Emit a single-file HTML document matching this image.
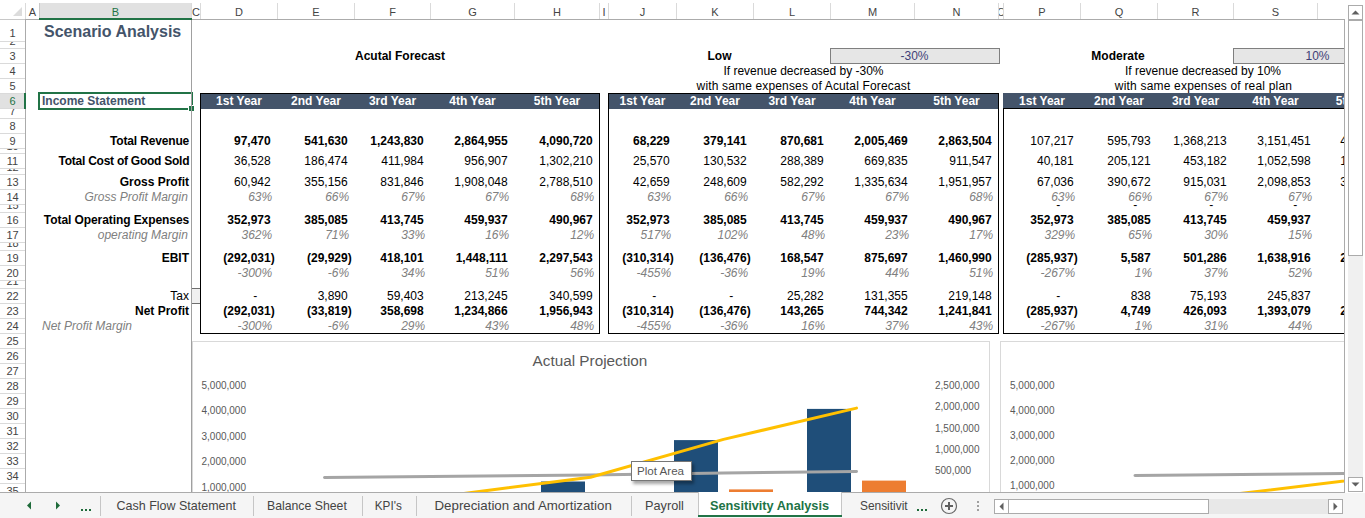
<!DOCTYPE html>
<html><head><meta charset="utf-8"><style>
html,body{margin:0;padding:0;background:#fff;}
body{width:1365px;height:518px;overflow:hidden;position:relative;font-family:"Liberation Sans", sans-serif;}
#root div,#root svg{position:absolute;white-space:pre;}
#root svg text{font-family:"Liberation Sans", sans-serif;}
</style></head><body><div id="root">
<div style="left:26px;top:20px;width:1318px;height:472px;overflow:hidden">
<div style="left:-26px;top:-20px;width:1365px;height:518px">
<div style="top:24.26px;font-size:16px;line-height:16px;color:#44546A;font-weight:bold;left:44px;">Scenario Analysis</div>
<div style="top:95.44px;font-size:12px;line-height:12px;color:#44546A;font-weight:bold;left:42px;">Income Statement</div>
<div style="top:135.44px;font-size:12px;line-height:12px;color:#000;font-weight:bold;right:1175.85px;letter-spacing:-0.15px">Total Revenue</div>
<div style="top:155.44px;font-size:12px;line-height:12px;color:#000;font-weight:bold;right:1175.75px;letter-spacing:-0.25px">Total Cost of Good Sold</div>
<div style="top:176.44px;font-size:12px;line-height:12px;color:#000;font-weight:bold;right:1176px;">Gross Profit</div>
<div style="top:191.44px;font-size:12px;line-height:12px;color:#808080;font-style:italic;right:1177.2px;">Gross Profit Margin</div>
<div style="top:214.44px;font-size:12px;line-height:12px;color:#000;font-weight:bold;right:1175.92px;letter-spacing:-0.08px">Total Operating Expenses</div>
<div style="top:229.44px;font-size:12px;line-height:12px;color:#808080;font-style:italic;right:1177.2px;">operating Margin</div>
<div style="top:252.44px;font-size:12px;line-height:12px;color:#000;font-weight:bold;right:1176px;">EBIT</div>
<div style="top:290.44px;font-size:12px;line-height:12px;color:#000;right:1176px;">Tax</div>
<div style="top:305.44px;font-size:12px;line-height:12px;color:#000;font-weight:bold;right:1176px;">Net Profit</div>
<div style="top:320.44px;font-size:12px;line-height:12px;color:#808080;font-style:italic;left:42px;">Net Profit Margin</div>
<div style="left:192px;top:288px;width:8px;height:16px;background:#f0f0f0;border-top:1px solid #6e6e6e;border-bottom:1px solid #6e6e6e;box-sizing:border-box"></div>
<div style="left:200px;top:93px;width:400px;height:16px;background:#44546A;"></div>
<div style="left:200px;top:93px;width:400px;height:1px;background:#000;"></div>
<div style="left:200px;top:93px;width:1px;height:241px;background:#000;"></div>
<div style="left:599px;top:93px;width:1px;height:241px;background:#000;"></div>
<div style="left:200px;top:333px;width:400px;height:1px;background:#000;"></div>
<div style="top:95.44px;font-size:12px;line-height:12px;color:#fff;font-weight:bold;left:-161.0px;width:800px;text-align:center;">1st Year</div>
<div style="top:95.44px;font-size:12px;line-height:12px;color:#fff;font-weight:bold;left:-84.0px;width:800px;text-align:center;">2nd Year</div>
<div style="top:95.44px;font-size:12px;line-height:12px;color:#fff;font-weight:bold;left:-7.5px;width:800px;text-align:center;">3rd Year</div>
<div style="top:95.44px;font-size:12px;line-height:12px;color:#fff;font-weight:bold;left:72.5px;width:800px;text-align:center;">4th Year</div>
<div style="top:95.44px;font-size:12px;line-height:12px;color:#fff;font-weight:bold;left:157.0px;width:800px;text-align:center;">5th Year</div>
<div style="top:135.44px;font-size:12px;line-height:12px;color:#000;font-weight:bold;right:1090.3px;">97,470<span style="visibility:hidden">)</span></div>
<div style="top:135.44px;font-size:12px;line-height:12px;color:#000;font-weight:bold;right:1013.3px;">541,630<span style="visibility:hidden">)</span></div>
<div style="top:135.44px;font-size:12px;line-height:12px;color:#000;font-weight:bold;right:937.3px;">1,243,830<span style="visibility:hidden">)</span></div>
<div style="top:135.44px;font-size:12px;line-height:12px;color:#000;font-weight:bold;right:853.3px;">2,864,955<span style="visibility:hidden">)</span></div>
<div style="top:135.44px;font-size:12px;line-height:12px;color:#000;font-weight:bold;right:768.3px;">4,090,720<span style="visibility:hidden">)</span></div>
<div style="top:155.44px;font-size:12px;line-height:12px;color:#000;right:1090.3px;">36,528<span style="visibility:hidden">)</span></div>
<div style="top:155.44px;font-size:12px;line-height:12px;color:#000;right:1013.3px;">186,474<span style="visibility:hidden">)</span></div>
<div style="top:155.44px;font-size:12px;line-height:12px;color:#000;right:937.3px;">411,984<span style="visibility:hidden">)</span></div>
<div style="top:155.44px;font-size:12px;line-height:12px;color:#000;right:853.3px;">956,907<span style="visibility:hidden">)</span></div>
<div style="top:155.44px;font-size:12px;line-height:12px;color:#000;right:768.3px;">1,302,210<span style="visibility:hidden">)</span></div>
<div style="top:176.44px;font-size:12px;line-height:12px;color:#000;right:1090.3px;">60,942<span style="visibility:hidden">)</span></div>
<div style="top:176.44px;font-size:12px;line-height:12px;color:#000;right:1013.3px;">355,156<span style="visibility:hidden">)</span></div>
<div style="top:176.44px;font-size:12px;line-height:12px;color:#000;right:937.3px;">831,846<span style="visibility:hidden">)</span></div>
<div style="top:176.44px;font-size:12px;line-height:12px;color:#000;right:853.3px;">1,908,048<span style="visibility:hidden">)</span></div>
<div style="top:176.44px;font-size:12px;line-height:12px;color:#000;right:768.3px;">2,788,510<span style="visibility:hidden">)</span></div>
<div style="top:191.44px;font-size:12px;line-height:12px;color:#808080;font-style:italic;right:1088.8px;">63%<span style="visibility:hidden">)</span></div>
<div style="top:191.44px;font-size:12px;line-height:12px;color:#808080;font-style:italic;right:1011.8px;">66%<span style="visibility:hidden">)</span></div>
<div style="top:191.44px;font-size:12px;line-height:12px;color:#808080;font-style:italic;right:935.8px;">67%<span style="visibility:hidden">)</span></div>
<div style="top:191.44px;font-size:12px;line-height:12px;color:#808080;font-style:italic;right:851.8px;">67%<span style="visibility:hidden">)</span></div>
<div style="top:191.44px;font-size:12px;line-height:12px;color:#808080;font-style:italic;right:766.8px;">68%<span style="visibility:hidden">)</span></div>
<div style="top:214.44px;font-size:12px;line-height:12px;color:#000;font-weight:bold;right:1090.3px;">352,973<span style="visibility:hidden">)</span></div>
<div style="top:214.44px;font-size:12px;line-height:12px;color:#000;font-weight:bold;right:1013.3px;">385,085<span style="visibility:hidden">)</span></div>
<div style="top:214.44px;font-size:12px;line-height:12px;color:#000;font-weight:bold;right:937.3px;">413,745<span style="visibility:hidden">)</span></div>
<div style="top:214.44px;font-size:12px;line-height:12px;color:#000;font-weight:bold;right:853.3px;">459,937<span style="visibility:hidden">)</span></div>
<div style="top:214.44px;font-size:12px;line-height:12px;color:#000;font-weight:bold;right:768.3px;">490,967<span style="visibility:hidden">)</span></div>
<div style="top:229.44px;font-size:12px;line-height:12px;color:#808080;font-style:italic;right:1088.8px;">362%<span style="visibility:hidden">)</span></div>
<div style="top:229.44px;font-size:12px;line-height:12px;color:#808080;font-style:italic;right:1011.8px;">71%<span style="visibility:hidden">)</span></div>
<div style="top:229.44px;font-size:12px;line-height:12px;color:#808080;font-style:italic;right:935.8px;">33%<span style="visibility:hidden">)</span></div>
<div style="top:229.44px;font-size:12px;line-height:12px;color:#808080;font-style:italic;right:851.8px;">16%<span style="visibility:hidden">)</span></div>
<div style="top:229.44px;font-size:12px;line-height:12px;color:#808080;font-style:italic;right:766.8px;">12%<span style="visibility:hidden">)</span></div>
<div style="top:252.44px;font-size:12px;line-height:12px;color:#000;font-weight:bold;right:1090.3px;">(292,031)</div>
<div style="top:252.44px;font-size:12px;line-height:12px;color:#000;font-weight:bold;right:1013.3px;">(29,929)</div>
<div style="top:252.44px;font-size:12px;line-height:12px;color:#000;font-weight:bold;right:937.3px;">418,101<span style="visibility:hidden">)</span></div>
<div style="top:252.44px;font-size:12px;line-height:12px;color:#000;font-weight:bold;right:853.3px;">1,448,111<span style="visibility:hidden">)</span></div>
<div style="top:252.44px;font-size:12px;line-height:12px;color:#000;font-weight:bold;right:768.3px;">2,297,543<span style="visibility:hidden">)</span></div>
<div style="top:267.44px;font-size:12px;line-height:12px;color:#808080;font-style:italic;right:1088.8px;">-300%<span style="visibility:hidden">)</span></div>
<div style="top:267.44px;font-size:12px;line-height:12px;color:#808080;font-style:italic;right:1011.8px;">-6%<span style="visibility:hidden">)</span></div>
<div style="top:267.44px;font-size:12px;line-height:12px;color:#808080;font-style:italic;right:935.8px;">34%<span style="visibility:hidden">)</span></div>
<div style="top:267.44px;font-size:12px;line-height:12px;color:#808080;font-style:italic;right:851.8px;">51%<span style="visibility:hidden">)</span></div>
<div style="top:267.44px;font-size:12px;line-height:12px;color:#808080;font-style:italic;right:766.8px;">56%<span style="visibility:hidden">)</span></div>
<div style="top:290.44px;font-size:12px;line-height:12px;color:#000;right:1090.3px;">-<span style="visibility:hidden">00)</span></div>
<div style="top:290.44px;font-size:12px;line-height:12px;color:#000;right:1013.3px;">3,890<span style="visibility:hidden">)</span></div>
<div style="top:290.44px;font-size:12px;line-height:12px;color:#000;right:937.3px;">59,403<span style="visibility:hidden">)</span></div>
<div style="top:290.44px;font-size:12px;line-height:12px;color:#000;right:853.3px;">213,245<span style="visibility:hidden">)</span></div>
<div style="top:290.44px;font-size:12px;line-height:12px;color:#000;right:768.3px;">340,599<span style="visibility:hidden">)</span></div>
<div style="top:305.44px;font-size:12px;line-height:12px;color:#000;font-weight:bold;right:1090.3px;">(292,031)</div>
<div style="top:305.44px;font-size:12px;line-height:12px;color:#000;font-weight:bold;right:1013.3px;">(33,819)</div>
<div style="top:305.44px;font-size:12px;line-height:12px;color:#000;font-weight:bold;right:937.3px;">358,698<span style="visibility:hidden">)</span></div>
<div style="top:305.44px;font-size:12px;line-height:12px;color:#000;font-weight:bold;right:853.3px;">1,234,866<span style="visibility:hidden">)</span></div>
<div style="top:305.44px;font-size:12px;line-height:12px;color:#000;font-weight:bold;right:768.3px;">1,956,943<span style="visibility:hidden">)</span></div>
<div style="top:320.44px;font-size:12px;line-height:12px;color:#808080;font-style:italic;right:1088.8px;">-300%<span style="visibility:hidden">)</span></div>
<div style="top:320.44px;font-size:12px;line-height:12px;color:#808080;font-style:italic;right:1011.8px;">-6%<span style="visibility:hidden">)</span></div>
<div style="top:320.44px;font-size:12px;line-height:12px;color:#808080;font-style:italic;right:935.8px;">29%<span style="visibility:hidden">)</span></div>
<div style="top:320.44px;font-size:12px;line-height:12px;color:#808080;font-style:italic;right:851.8px;">43%<span style="visibility:hidden">)</span></div>
<div style="top:320.44px;font-size:12px;line-height:12px;color:#808080;font-style:italic;right:766.8px;">48%<span style="visibility:hidden">)</span></div>
<div style="top:50.44px;font-size:12px;line-height:12px;color:#000;font-weight:bold;left:0px;width:800px;text-align:center;">Acutal Forecast</div>
<div style="left:608px;top:93px;width:391px;height:16px;background:#44546A;"></div>
<div style="left:608px;top:93px;width:391px;height:1px;background:#000;"></div>
<div style="left:608px;top:93px;width:1px;height:241px;background:#000;"></div>
<div style="left:998px;top:93px;width:1px;height:241px;background:#000;"></div>
<div style="left:608px;top:333px;width:391px;height:1px;background:#000;"></div>
<div style="top:95.44px;font-size:12px;line-height:12px;color:#fff;font-weight:bold;left:242.5px;width:800px;text-align:center;">1st Year</div>
<div style="top:95.44px;font-size:12px;line-height:12px;color:#fff;font-weight:bold;left:315.0px;width:800px;text-align:center;">2nd Year</div>
<div style="top:95.44px;font-size:12px;line-height:12px;color:#fff;font-weight:bold;left:392.0px;width:800px;text-align:center;">3rd Year</div>
<div style="top:95.44px;font-size:12px;line-height:12px;color:#fff;font-weight:bold;left:472.5px;width:800px;text-align:center;">4th Year</div>
<div style="top:95.44px;font-size:12px;line-height:12px;color:#fff;font-weight:bold;left:556.5px;width:800px;text-align:center;">5th Year</div>
<div style="top:135.44px;font-size:12px;line-height:12px;color:#000;font-weight:bold;right:691.3px;">68,229<span style="visibility:hidden">)</span></div>
<div style="top:135.44px;font-size:12px;line-height:12px;color:#000;font-weight:bold;right:614.3px;">379,141<span style="visibility:hidden">)</span></div>
<div style="top:135.44px;font-size:12px;line-height:12px;color:#000;font-weight:bold;right:537.3px;">870,681<span style="visibility:hidden">)</span></div>
<div style="top:135.44px;font-size:12px;line-height:12px;color:#000;font-weight:bold;right:453.29999999999995px;">2,005,469<span style="visibility:hidden">)</span></div>
<div style="top:135.44px;font-size:12px;line-height:12px;color:#000;font-weight:bold;right:369.29999999999995px;">2,863,504<span style="visibility:hidden">)</span></div>
<div style="top:155.44px;font-size:12px;line-height:12px;color:#000;right:691.3px;">25,570<span style="visibility:hidden">)</span></div>
<div style="top:155.44px;font-size:12px;line-height:12px;color:#000;right:614.3px;">130,532<span style="visibility:hidden">)</span></div>
<div style="top:155.44px;font-size:12px;line-height:12px;color:#000;right:537.3px;">288,389<span style="visibility:hidden">)</span></div>
<div style="top:155.44px;font-size:12px;line-height:12px;color:#000;right:453.29999999999995px;">669,835<span style="visibility:hidden">)</span></div>
<div style="top:155.44px;font-size:12px;line-height:12px;color:#000;right:369.29999999999995px;">911,547<span style="visibility:hidden">)</span></div>
<div style="top:176.44px;font-size:12px;line-height:12px;color:#000;right:691.3px;">42,659<span style="visibility:hidden">)</span></div>
<div style="top:176.44px;font-size:12px;line-height:12px;color:#000;right:614.3px;">248,609<span style="visibility:hidden">)</span></div>
<div style="top:176.44px;font-size:12px;line-height:12px;color:#000;right:537.3px;">582,292<span style="visibility:hidden">)</span></div>
<div style="top:176.44px;font-size:12px;line-height:12px;color:#000;right:453.29999999999995px;">1,335,634<span style="visibility:hidden">)</span></div>
<div style="top:176.44px;font-size:12px;line-height:12px;color:#000;right:369.29999999999995px;">1,951,957<span style="visibility:hidden">)</span></div>
<div style="top:191.44px;font-size:12px;line-height:12px;color:#808080;font-style:italic;right:689.8px;">63%<span style="visibility:hidden">)</span></div>
<div style="top:191.44px;font-size:12px;line-height:12px;color:#808080;font-style:italic;right:612.8px;">66%<span style="visibility:hidden">)</span></div>
<div style="top:191.44px;font-size:12px;line-height:12px;color:#808080;font-style:italic;right:535.8px;">67%<span style="visibility:hidden">)</span></div>
<div style="top:191.44px;font-size:12px;line-height:12px;color:#808080;font-style:italic;right:451.79999999999995px;">67%<span style="visibility:hidden">)</span></div>
<div style="top:191.44px;font-size:12px;line-height:12px;color:#808080;font-style:italic;right:367.79999999999995px;">68%<span style="visibility:hidden">)</span></div>
<div style="top:214.44px;font-size:12px;line-height:12px;color:#000;font-weight:bold;right:691.3px;">352,973<span style="visibility:hidden">)</span></div>
<div style="top:214.44px;font-size:12px;line-height:12px;color:#000;font-weight:bold;right:614.3px;">385,085<span style="visibility:hidden">)</span></div>
<div style="top:214.44px;font-size:12px;line-height:12px;color:#000;font-weight:bold;right:537.3px;">413,745<span style="visibility:hidden">)</span></div>
<div style="top:214.44px;font-size:12px;line-height:12px;color:#000;font-weight:bold;right:453.29999999999995px;">459,937<span style="visibility:hidden">)</span></div>
<div style="top:214.44px;font-size:12px;line-height:12px;color:#000;font-weight:bold;right:369.29999999999995px;">490,967<span style="visibility:hidden">)</span></div>
<div style="top:229.44px;font-size:12px;line-height:12px;color:#808080;font-style:italic;right:689.8px;">517%<span style="visibility:hidden">)</span></div>
<div style="top:229.44px;font-size:12px;line-height:12px;color:#808080;font-style:italic;right:612.8px;">102%<span style="visibility:hidden">)</span></div>
<div style="top:229.44px;font-size:12px;line-height:12px;color:#808080;font-style:italic;right:535.8px;">48%<span style="visibility:hidden">)</span></div>
<div style="top:229.44px;font-size:12px;line-height:12px;color:#808080;font-style:italic;right:451.79999999999995px;">23%<span style="visibility:hidden">)</span></div>
<div style="top:229.44px;font-size:12px;line-height:12px;color:#808080;font-style:italic;right:367.79999999999995px;">17%<span style="visibility:hidden">)</span></div>
<div style="top:252.44px;font-size:12px;line-height:12px;color:#000;font-weight:bold;right:691.3px;">(310,314)</div>
<div style="top:252.44px;font-size:12px;line-height:12px;color:#000;font-weight:bold;right:614.3px;">(136,476)</div>
<div style="top:252.44px;font-size:12px;line-height:12px;color:#000;font-weight:bold;right:537.3px;">168,547<span style="visibility:hidden">)</span></div>
<div style="top:252.44px;font-size:12px;line-height:12px;color:#000;font-weight:bold;right:453.29999999999995px;">875,697<span style="visibility:hidden">)</span></div>
<div style="top:252.44px;font-size:12px;line-height:12px;color:#000;font-weight:bold;right:369.29999999999995px;">1,460,990<span style="visibility:hidden">)</span></div>
<div style="top:267.44px;font-size:12px;line-height:12px;color:#808080;font-style:italic;right:689.8px;">-455%<span style="visibility:hidden">)</span></div>
<div style="top:267.44px;font-size:12px;line-height:12px;color:#808080;font-style:italic;right:612.8px;">-36%<span style="visibility:hidden">)</span></div>
<div style="top:267.44px;font-size:12px;line-height:12px;color:#808080;font-style:italic;right:535.8px;">19%<span style="visibility:hidden">)</span></div>
<div style="top:267.44px;font-size:12px;line-height:12px;color:#808080;font-style:italic;right:451.79999999999995px;">44%<span style="visibility:hidden">)</span></div>
<div style="top:267.44px;font-size:12px;line-height:12px;color:#808080;font-style:italic;right:367.79999999999995px;">51%<span style="visibility:hidden">)</span></div>
<div style="top:290.44px;font-size:12px;line-height:12px;color:#000;right:691.3px;">-<span style="visibility:hidden">00)</span></div>
<div style="top:290.44px;font-size:12px;line-height:12px;color:#000;right:614.3px;">-<span style="visibility:hidden">00)</span></div>
<div style="top:290.44px;font-size:12px;line-height:12px;color:#000;right:537.3px;">25,282<span style="visibility:hidden">)</span></div>
<div style="top:290.44px;font-size:12px;line-height:12px;color:#000;right:453.29999999999995px;">131,355<span style="visibility:hidden">)</span></div>
<div style="top:290.44px;font-size:12px;line-height:12px;color:#000;right:369.29999999999995px;">219,148<span style="visibility:hidden">)</span></div>
<div style="top:305.44px;font-size:12px;line-height:12px;color:#000;font-weight:bold;right:691.3px;">(310,314)</div>
<div style="top:305.44px;font-size:12px;line-height:12px;color:#000;font-weight:bold;right:614.3px;">(136,476)</div>
<div style="top:305.44px;font-size:12px;line-height:12px;color:#000;font-weight:bold;right:537.3px;">143,265<span style="visibility:hidden">)</span></div>
<div style="top:305.44px;font-size:12px;line-height:12px;color:#000;font-weight:bold;right:453.29999999999995px;">744,342<span style="visibility:hidden">)</span></div>
<div style="top:305.44px;font-size:12px;line-height:12px;color:#000;font-weight:bold;right:369.29999999999995px;">1,241,841<span style="visibility:hidden">)</span></div>
<div style="top:320.44px;font-size:12px;line-height:12px;color:#808080;font-style:italic;right:689.8px;">-455%<span style="visibility:hidden">)</span></div>
<div style="top:320.44px;font-size:12px;line-height:12px;color:#808080;font-style:italic;right:612.8px;">-36%<span style="visibility:hidden">)</span></div>
<div style="top:320.44px;font-size:12px;line-height:12px;color:#808080;font-style:italic;right:535.8px;">16%<span style="visibility:hidden">)</span></div>
<div style="top:320.44px;font-size:12px;line-height:12px;color:#808080;font-style:italic;right:451.79999999999995px;">37%<span style="visibility:hidden">)</span></div>
<div style="top:320.44px;font-size:12px;line-height:12px;color:#808080;font-style:italic;right:367.79999999999995px;">43%<span style="visibility:hidden">)</span></div>
<div style="top:50.44px;font-size:12px;line-height:12px;color:#000;font-weight:bold;left:319.5px;width:800px;text-align:center;">Low</div>
<div style="left:830px;top:48px;width:170px;height:16px;background:#e6e6e6;border:1px solid #7f7f7f;box-sizing:border-box"></div>
<div style="top:50.44px;font-size:12px;line-height:12px;color:#3F3F76;left:514.5px;width:800px;text-align:center;">-30%</div>
<div style="top:65.44px;font-size:12px;line-height:12px;color:#000;left:403.5px;width:800px;text-align:center;">If revenue decreased by -30%</div>
<div style="top:80.44px;font-size:12px;line-height:12px;color:#000;left:403.5px;width:800px;text-align:center;letter-spacing:0.155px">with same expenses of Acutal Forecast</div>
<div style="left:1003px;top:93px;width:400px;height:16px;background:#44546A;"></div>
<div style="left:1003px;top:108px;width:400px;height:1px;background:#000;"></div>
<div style="left:1003px;top:108px;width:1px;height:226px;background:#000;"></div>
<div style="left:1402px;top:93px;width:1px;height:241px;background:#000;"></div>
<div style="left:1003px;top:333px;width:400px;height:1px;background:#000;"></div>
<div style="top:95.44px;font-size:12px;line-height:12px;color:#fff;font-weight:bold;left:642.0px;width:800px;text-align:center;">1st Year</div>
<div style="top:95.44px;font-size:12px;line-height:12px;color:#fff;font-weight:bold;left:719.0px;width:800px;text-align:center;">2nd Year</div>
<div style="top:95.44px;font-size:12px;line-height:12px;color:#fff;font-weight:bold;left:795.5px;width:800px;text-align:center;">3rd Year</div>
<div style="top:95.44px;font-size:12px;line-height:12px;color:#fff;font-weight:bold;left:875.5px;width:800px;text-align:center;">4th Year</div>
<div style="top:95.44px;font-size:12px;line-height:12px;color:#fff;font-weight:bold;left:959.0px;width:800px;text-align:center;">5th Year</div>
<div style="top:135.44px;font-size:12px;line-height:12px;color:#000;right:287.29999999999995px;">107,217<span style="visibility:hidden">)</span></div>
<div style="top:135.44px;font-size:12px;line-height:12px;color:#000;right:210.29999999999995px;">595,793<span style="visibility:hidden">)</span></div>
<div style="top:135.44px;font-size:12px;line-height:12px;color:#000;right:134.29999999999995px;">1,368,213<span style="visibility:hidden">)</span></div>
<div style="top:135.44px;font-size:12px;line-height:12px;color:#000;right:50.299999999999955px;">3,151,451<span style="visibility:hidden">)</span></div>
<div style="top:135.44px;font-size:12px;line-height:12px;color:#000;right:-32.700000000000045px;">4,499,792<span style="visibility:hidden">)</span></div>
<div style="top:155.44px;font-size:12px;line-height:12px;color:#000;right:287.29999999999995px;">40,181<span style="visibility:hidden">)</span></div>
<div style="top:155.44px;font-size:12px;line-height:12px;color:#000;right:210.29999999999995px;">205,121<span style="visibility:hidden">)</span></div>
<div style="top:155.44px;font-size:12px;line-height:12px;color:#000;right:134.29999999999995px;">453,182<span style="visibility:hidden">)</span></div>
<div style="top:155.44px;font-size:12px;line-height:12px;color:#000;right:50.299999999999955px;">1,052,598<span style="visibility:hidden">)</span></div>
<div style="top:155.44px;font-size:12px;line-height:12px;color:#000;right:-32.700000000000045px;">1,432,431<span style="visibility:hidden">)</span></div>
<div style="top:176.44px;font-size:12px;line-height:12px;color:#000;right:287.29999999999995px;">67,036<span style="visibility:hidden">)</span></div>
<div style="top:176.44px;font-size:12px;line-height:12px;color:#000;right:210.29999999999995px;">390,672<span style="visibility:hidden">)</span></div>
<div style="top:176.44px;font-size:12px;line-height:12px;color:#000;right:134.29999999999995px;">915,031<span style="visibility:hidden">)</span></div>
<div style="top:176.44px;font-size:12px;line-height:12px;color:#000;right:50.299999999999955px;">2,098,853<span style="visibility:hidden">)</span></div>
<div style="top:176.44px;font-size:12px;line-height:12px;color:#000;right:-32.700000000000045px;">3,067,361<span style="visibility:hidden">)</span></div>
<div style="top:191.44px;font-size:12px;line-height:12px;color:#808080;font-style:italic;right:285.79999999999995px;">63%<span style="visibility:hidden">)</span></div>
<div style="top:191.44px;font-size:12px;line-height:12px;color:#808080;font-style:italic;right:208.79999999999995px;">66%<span style="visibility:hidden">)</span></div>
<div style="top:191.44px;font-size:12px;line-height:12px;color:#808080;font-style:italic;right:132.79999999999995px;">67%<span style="visibility:hidden">)</span></div>
<div style="top:191.44px;font-size:12px;line-height:12px;color:#808080;font-style:italic;right:48.799999999999955px;">67%<span style="visibility:hidden">)</span></div>
<div style="top:191.44px;font-size:12px;line-height:12px;color:#808080;font-style:italic;right:-34.200000000000045px;">68%<span style="visibility:hidden">)</span></div>
<div style="top:199.44px;font-size:12px;line-height:12px;color:#000;right:287.29999999999995px;">-<span style="visibility:hidden">00)</span></div>
<div style="top:199.44px;font-size:12px;line-height:12px;color:#000;right:210.29999999999995px;">-<span style="visibility:hidden">00)</span></div>
<div style="top:199.44px;font-size:12px;line-height:12px;color:#000;right:134.29999999999995px;">-<span style="visibility:hidden">00)</span></div>
<div style="top:199.44px;font-size:12px;line-height:12px;color:#000;right:50.299999999999955px;">-<span style="visibility:hidden">00)</span></div>
<div style="top:199.44px;font-size:12px;line-height:12px;color:#000;right:-32.700000000000045px;">-<span style="visibility:hidden">00)</span></div>
<div style="top:214.44px;font-size:12px;line-height:12px;color:#000;font-weight:bold;right:287.29999999999995px;">352,973<span style="visibility:hidden">)</span></div>
<div style="top:214.44px;font-size:12px;line-height:12px;color:#000;font-weight:bold;right:210.29999999999995px;">385,085<span style="visibility:hidden">)</span></div>
<div style="top:214.44px;font-size:12px;line-height:12px;color:#000;font-weight:bold;right:134.29999999999995px;">413,745<span style="visibility:hidden">)</span></div>
<div style="top:214.44px;font-size:12px;line-height:12px;color:#000;font-weight:bold;right:50.299999999999955px;">459,937<span style="visibility:hidden">)</span></div>
<div style="top:214.44px;font-size:12px;line-height:12px;color:#000;font-weight:bold;right:-32.700000000000045px;">490,967<span style="visibility:hidden">)</span></div>
<div style="top:229.44px;font-size:12px;line-height:12px;color:#808080;font-style:italic;right:285.79999999999995px;">329%<span style="visibility:hidden">)</span></div>
<div style="top:229.44px;font-size:12px;line-height:12px;color:#808080;font-style:italic;right:208.79999999999995px;">65%<span style="visibility:hidden">)</span></div>
<div style="top:229.44px;font-size:12px;line-height:12px;color:#808080;font-style:italic;right:132.79999999999995px;">30%<span style="visibility:hidden">)</span></div>
<div style="top:229.44px;font-size:12px;line-height:12px;color:#808080;font-style:italic;right:48.799999999999955px;">15%<span style="visibility:hidden">)</span></div>
<div style="top:229.44px;font-size:12px;line-height:12px;color:#808080;font-style:italic;right:-34.200000000000045px;">11%<span style="visibility:hidden">)</span></div>
<div style="top:252.44px;font-size:12px;line-height:12px;color:#000;font-weight:bold;right:287.29999999999995px;">(285,937)</div>
<div style="top:252.44px;font-size:12px;line-height:12px;color:#000;font-weight:bold;right:210.29999999999995px;">5,587<span style="visibility:hidden">)</span></div>
<div style="top:252.44px;font-size:12px;line-height:12px;color:#000;font-weight:bold;right:134.29999999999995px;">501,286<span style="visibility:hidden">)</span></div>
<div style="top:252.44px;font-size:12px;line-height:12px;color:#000;font-weight:bold;right:50.299999999999955px;">1,638,916<span style="visibility:hidden">)</span></div>
<div style="top:252.44px;font-size:12px;line-height:12px;color:#000;font-weight:bold;right:-32.700000000000045px;">2,576,394<span style="visibility:hidden">)</span></div>
<div style="top:267.44px;font-size:12px;line-height:12px;color:#808080;font-style:italic;right:285.79999999999995px;">-267%<span style="visibility:hidden">)</span></div>
<div style="top:267.44px;font-size:12px;line-height:12px;color:#808080;font-style:italic;right:208.79999999999995px;">1%<span style="visibility:hidden">)</span></div>
<div style="top:267.44px;font-size:12px;line-height:12px;color:#808080;font-style:italic;right:132.79999999999995px;">37%<span style="visibility:hidden">)</span></div>
<div style="top:267.44px;font-size:12px;line-height:12px;color:#808080;font-style:italic;right:48.799999999999955px;">52%<span style="visibility:hidden">)</span></div>
<div style="top:267.44px;font-size:12px;line-height:12px;color:#808080;font-style:italic;right:-34.200000000000045px;">57%<span style="visibility:hidden">)</span></div>
<div style="top:290.44px;font-size:12px;line-height:12px;color:#000;right:287.29999999999995px;">-<span style="visibility:hidden">00)</span></div>
<div style="top:290.44px;font-size:12px;line-height:12px;color:#000;right:210.29999999999995px;">838<span style="visibility:hidden">)</span></div>
<div style="top:290.44px;font-size:12px;line-height:12px;color:#000;right:134.29999999999995px;">75,193<span style="visibility:hidden">)</span></div>
<div style="top:290.44px;font-size:12px;line-height:12px;color:#000;right:50.299999999999955px;">245,837<span style="visibility:hidden">)</span></div>
<div style="top:290.44px;font-size:12px;line-height:12px;color:#000;right:-32.700000000000045px;">386,099<span style="visibility:hidden">)</span></div>
<div style="top:305.44px;font-size:12px;line-height:12px;color:#000;font-weight:bold;right:287.29999999999995px;">(285,937)</div>
<div style="top:305.44px;font-size:12px;line-height:12px;color:#000;font-weight:bold;right:210.29999999999995px;">4,749<span style="visibility:hidden">)</span></div>
<div style="top:305.44px;font-size:12px;line-height:12px;color:#000;font-weight:bold;right:134.29999999999995px;">426,093<span style="visibility:hidden">)</span></div>
<div style="top:305.44px;font-size:12px;line-height:12px;color:#000;font-weight:bold;right:50.299999999999955px;">1,393,079<span style="visibility:hidden">)</span></div>
<div style="top:305.44px;font-size:12px;line-height:12px;color:#000;font-weight:bold;right:-32.700000000000045px;">2,190,295<span style="visibility:hidden">)</span></div>
<div style="top:320.44px;font-size:12px;line-height:12px;color:#808080;font-style:italic;right:285.79999999999995px;">-267%<span style="visibility:hidden">)</span></div>
<div style="top:320.44px;font-size:12px;line-height:12px;color:#808080;font-style:italic;right:208.79999999999995px;">1%<span style="visibility:hidden">)</span></div>
<div style="top:320.44px;font-size:12px;line-height:12px;color:#808080;font-style:italic;right:132.79999999999995px;">31%<span style="visibility:hidden">)</span></div>
<div style="top:320.44px;font-size:12px;line-height:12px;color:#808080;font-style:italic;right:48.799999999999955px;">44%<span style="visibility:hidden">)</span></div>
<div style="top:320.44px;font-size:12px;line-height:12px;color:#808080;font-style:italic;right:-34.200000000000045px;">49%<span style="visibility:hidden">)</span></div>
<div style="top:50.44px;font-size:12px;line-height:12px;color:#000;font-weight:bold;left:718px;width:800px;text-align:center;">Moderate</div>
<div style="left:1233px;top:48px;width:170px;height:16px;background:#e6e6e6;border:1px solid #7f7f7f;box-sizing:border-box"></div>
<div style="top:50.44px;font-size:12px;line-height:12px;color:#3F3F76;left:917.5px;width:800px;text-align:center;">10%</div>
<div style="top:65.44px;font-size:12px;line-height:12px;color:#000;left:803px;width:800px;text-align:center;">If revenue decreased by 10%</div>
<div style="top:80.44px;font-size:12px;line-height:12px;color:#000;left:803.5px;width:800px;text-align:center;letter-spacing:0.19px">with same expenses of real plan</div>
<div style="left:192px;top:341px;width:798px;height:160px;background:#fff;border:1px solid #d9d9d9;box-sizing:border-box"></div>
<div style="left:490px;top:352.85px;width:200px;text-align:center;font-size:15.3px;line-height:15.3px;color:#595959">Actual Projection</div>
<div style="right:1119px;top:381.44px;font-size:10px;line-height:10px;color:#595959">5,000,000</div>
<div style="right:1119px;top:405.74px;font-size:10px;line-height:10px;color:#595959">4,000,000</div>
<div style="right:1119px;top:432.14px;font-size:10px;line-height:10px;color:#595959">3,000,000</div>
<div style="right:1119px;top:457.14px;font-size:10px;line-height:10px;color:#595959">2,000,000</div>
<div style="right:1119px;top:483.04px;font-size:10px;line-height:10px;color:#595959">1,000,000</div>
<div style="left:935px;top:381.34px;font-size:10px;line-height:10px;color:#595959">2,500,000</div>
<div style="left:935px;top:402.44px;font-size:10px;line-height:10px;color:#595959">2,000,000</div>
<div style="left:935px;top:423.74px;font-size:10px;line-height:10px;color:#595959">1,500,000</div>
<div style="left:935px;top:445.24px;font-size:10px;line-height:10px;color:#595959">1,000,000</div>
<div style="left:935px;top:466.34px;font-size:10px;line-height:10px;color:#595959">500,000</div>
<svg style="left:0;top:0" width="1365" height="492"><rect x="275.0" y="510.7" width="44" height="89.3" fill="#1F4E79"/><rect x="408.0" y="499.4" width="44" height="100.6" fill="#1F4E79"/><rect x="541.0" y="481.5" width="44" height="118.5" fill="#1F4E79"/><rect x="674.0" y="440.1" width="44" height="159.9" fill="#1F4E79"/><rect x="807.0" y="408.9" width="44" height="191.1" fill="#1F4E79"/><rect x="330.0" y="512.9" width="44" height="87.7" fill="#ED7D31"/><rect x="463.0" y="509.0" width="44" height="91.6" fill="#ED7D31"/><rect x="596.0" y="503.3" width="44" height="97.3" fill="#ED7D31"/><rect x="729.0" y="489.4" width="44" height="111.2" fill="#ED7D31"/><rect x="862.0" y="480.6" width="44" height="120.0" fill="#ED7D31"/><polyline points="324.5,477.6 457.5,476.2 590.5,474.9 723.5,472.9 856.5,471.6" fill="none" stroke="#A5A5A5" stroke-width="3" stroke-linecap="round" stroke-linejoin="round"/><polyline points="324.5,505.5 457.5,494.3 590.5,477.3 723.5,439.4 856.5,408.1" fill="none" stroke="#FFC000" stroke-width="3" stroke-linecap="round" stroke-linejoin="round"/></svg>
<div style="left:631px;top:461px;width:61px;height:20px;background:#fff;border:1px solid #767676;box-sizing:border-box;box-shadow:2px 3px 3px rgba(0,0,0,0.35)"></div>
<div style="left:637px;top:464.88px;font-size:11.6px;line-height:11.6px;color:#575757">Plot Area</div>
<div style="left:1000px;top:341px;width:500px;height:160px;background:#fff;border:1px solid #d9d9d9;box-sizing:border-box"></div>
<div style="left:1010px;top:381.44px;font-size:10px;line-height:10px;color:#595959">5,000,000</div>
<div style="left:1010px;top:406.04px;font-size:10px;line-height:10px;color:#595959">4,000,000</div>
<div style="left:1010px;top:430.84px;font-size:10px;line-height:10px;color:#595959">3,000,000</div>
<div style="left:1010px;top:455.74px;font-size:10px;line-height:10px;color:#595959">2,000,000</div>
<div style="left:1010px;top:481.14px;font-size:10px;line-height:10px;color:#595959">1,000,000</div>
<svg style="left:0;top:0" width="1365" height="492"><polyline points="1135,475.5 1268,474.3 1401,472.9" fill="none" stroke="#A5A5A5" stroke-width="3" stroke-linecap="round"/><polyline points="1135,506.1 1401,474.2" fill="none" stroke="#FFC000" stroke-width="3" stroke-linecap="round"/></svg>
<div style="left:38px;top:92px;width:155px;height:18px;border:2px solid #217346;box-sizing:border-box"></div>
<div style="left:189px;top:106px;width:5px;height:5px;background:#217346;border:1px solid #fff;box-sizing:content-box;margin:-1px"></div>
<div style="left:191px;top:20px;width:1px;height:472px;background:#a0a0a0;"></div>
</div></div>
<svg style="left:0;top:0" width="25" height="19"><polygon points="22,7 22,16 13,16" fill="#dcdcdc"/></svg>
<div style="left:40px;top:3px;width:151px;height:15px;background:#e1e1e1"></div>
<div style="left:39px;top:3px;width:1px;height:16px;background:#dadada"></div>
<div style="left:191px;top:3px;width:1px;height:16px;background:#dadada"></div>
<div style="left:200px;top:3px;width:1px;height:16px;background:#dadada"></div>
<div style="left:277px;top:3px;width:1px;height:16px;background:#dadada"></div>
<div style="left:354px;top:3px;width:1px;height:16px;background:#dadada"></div>
<div style="left:430px;top:3px;width:1px;height:16px;background:#dadada"></div>
<div style="left:514px;top:3px;width:1px;height:16px;background:#dadada"></div>
<div style="left:599px;top:3px;width:1px;height:16px;background:#dadada"></div>
<div style="left:608px;top:3px;width:1px;height:16px;background:#dadada"></div>
<div style="left:676px;top:3px;width:1px;height:16px;background:#dadada"></div>
<div style="left:753px;top:3px;width:1px;height:16px;background:#dadada"></div>
<div style="left:830px;top:3px;width:1px;height:16px;background:#dadada"></div>
<div style="left:914px;top:3px;width:1px;height:16px;background:#dadada"></div>
<div style="left:998px;top:3px;width:1px;height:16px;background:#dadada"></div>
<div style="left:1003px;top:3px;width:1px;height:16px;background:#dadada"></div>
<div style="left:1080px;top:3px;width:1px;height:16px;background:#dadada"></div>
<div style="left:1157px;top:3px;width:1px;height:16px;background:#dadada"></div>
<div style="left:1233px;top:3px;width:1px;height:16px;background:#dadada"></div>
<div style="left:1317px;top:3px;width:1px;height:16px;background:#dadada"></div>
<div style="left:25px;top:3px;width:1px;height:16px;background:#dadada"></div>
<div style="left:39px;top:3px;width:1px;height:16px;background:#c8c8c8"></div>
<div style="left:0px;top:19px;width:1345px;height:1px;background:#ababab"></div>
<div style="left:0px;top:19px;width:25px;height:1px;background:#c8c8c8"></div>
<div style="left:39px;top:18px;width:153px;height:2px;background:#217346"></div>
<div style="left:-17.5px;top:7.49px;width:100px;text-align:center;font-size:11px;line-height:11px;color:#444444">A</div>
<div style="left:65.5px;top:7.49px;width:100px;text-align:center;font-size:11px;line-height:11px;color:#217346">B</div>
<div style="left:146.0px;top:7.49px;width:100px;text-align:center;font-size:11px;line-height:11px;color:#444444">C</div>
<div style="left:189.0px;top:7.49px;width:100px;text-align:center;font-size:11px;line-height:11px;color:#444444">D</div>
<div style="left:266.0px;top:7.49px;width:100px;text-align:center;font-size:11px;line-height:11px;color:#444444">E</div>
<div style="left:342.5px;top:7.49px;width:100px;text-align:center;font-size:11px;line-height:11px;color:#444444">F</div>
<div style="left:422.5px;top:7.49px;width:100px;text-align:center;font-size:11px;line-height:11px;color:#444444">G</div>
<div style="left:507.0px;top:7.49px;width:100px;text-align:center;font-size:11px;line-height:11px;color:#444444">H</div>
<div style="left:554.0px;top:7.49px;width:100px;text-align:center;font-size:11px;line-height:11px;color:#444444">I</div>
<div style="left:592.5px;top:7.49px;width:100px;text-align:center;font-size:11px;line-height:11px;color:#444444">J</div>
<div style="left:665.0px;top:7.49px;width:100px;text-align:center;font-size:11px;line-height:11px;color:#444444">K</div>
<div style="left:742.0px;top:7.49px;width:100px;text-align:center;font-size:11px;line-height:11px;color:#444444">L</div>
<div style="left:822.5px;top:7.49px;width:100px;text-align:center;font-size:11px;line-height:11px;color:#444444">M</div>
<div style="left:906.5px;top:7.49px;width:100px;text-align:center;font-size:11px;line-height:11px;color:#444444">N</div>
<div style="left:999px;top:5px;width:4px;height:14px;overflow:hidden"><div style="position:absolute;left:-2px;top:0;font-size:11px;line-height:14px;color:#444444">O</div></div>
<div style="left:992.0px;top:7.49px;width:100px;text-align:center;font-size:11px;line-height:11px;color:#444444">P</div>
<div style="left:1069.0px;top:7.49px;width:100px;text-align:center;font-size:11px;line-height:11px;color:#444444">Q</div>
<div style="left:1145.5px;top:7.49px;width:100px;text-align:center;font-size:11px;line-height:11px;color:#444444">R</div>
<div style="left:1225.5px;top:7.49px;width:100px;text-align:center;font-size:11px;line-height:11px;color:#444444">S</div>
<div style="left:1309.0px;top:7.49px;width:100px;text-align:center;font-size:11px;line-height:11px;color:#444444">T</div>
<div style="left:25px;top:19px;width:1px;height:473px;background:#ababab"></div>
<div style="left:0px;top:41px;width:25px;height:1px;background:#dadada"></div>
<div style="left:0px;top:48px;width:25px;height:1px;background:#dadada"></div>
<div style="left:0px;top:63px;width:25px;height:1px;background:#dadada"></div>
<div style="left:0px;top:78px;width:25px;height:1px;background:#dadada"></div>
<div style="left:0px;top:93px;width:25px;height:1px;background:#dadada"></div>
<div style="left:0px;top:108px;width:25px;height:1px;background:#dadada"></div>
<div style="left:0px;top:118px;width:25px;height:1px;background:#dadada"></div>
<div style="left:0px;top:133px;width:25px;height:1px;background:#dadada"></div>
<div style="left:0px;top:148px;width:25px;height:1px;background:#dadada"></div>
<div style="left:0px;top:153px;width:25px;height:1px;background:#dadada"></div>
<div style="left:0px;top:168px;width:25px;height:1px;background:#dadada"></div>
<div style="left:0px;top:174px;width:25px;height:1px;background:#dadada"></div>
<div style="left:0px;top:189px;width:25px;height:1px;background:#dadada"></div>
<div style="left:0px;top:204px;width:25px;height:1px;background:#dadada"></div>
<div style="left:0px;top:212px;width:25px;height:1px;background:#dadada"></div>
<div style="left:0px;top:227px;width:25px;height:1px;background:#dadada"></div>
<div style="left:0px;top:242px;width:25px;height:1px;background:#dadada"></div>
<div style="left:0px;top:250px;width:25px;height:1px;background:#dadada"></div>
<div style="left:0px;top:265px;width:25px;height:1px;background:#dadada"></div>
<div style="left:0px;top:280px;width:25px;height:1px;background:#dadada"></div>
<div style="left:0px;top:288px;width:25px;height:1px;background:#dadada"></div>
<div style="left:0px;top:303px;width:25px;height:1px;background:#dadada"></div>
<div style="left:0px;top:318px;width:25px;height:1px;background:#dadada"></div>
<div style="left:0px;top:333px;width:25px;height:1px;background:#dadada"></div>
<div style="left:0px;top:348px;width:25px;height:1px;background:#dadada"></div>
<div style="left:0px;top:363px;width:25px;height:1px;background:#dadada"></div>
<div style="left:0px;top:378px;width:25px;height:1px;background:#dadada"></div>
<div style="left:0px;top:393px;width:25px;height:1px;background:#dadada"></div>
<div style="left:0px;top:408px;width:25px;height:1px;background:#dadada"></div>
<div style="left:0px;top:423px;width:25px;height:1px;background:#dadada"></div>
<div style="left:0px;top:438px;width:25px;height:1px;background:#dadada"></div>
<div style="left:0px;top:453px;width:25px;height:1px;background:#dadada"></div>
<div style="left:0px;top:468px;width:25px;height:1px;background:#dadada"></div>
<div style="left:0px;top:483px;width:25px;height:1px;background:#dadada"></div>
<div style="left:0px;top:94px;width:24px;height:14px;background:#e1e1e1"></div>
<div style="left:24px;top:93px;width:2px;height:16px;background:#217346"></div>
<div style="left:0px;top:20px;width:25px;height:21px;overflow:hidden"><div style="position:absolute;left:0;width:25px;top:7.59px;text-align:center;font-size:11px;line-height:11px;color:#444444">1</div></div>
<div style="left:0px;top:42px;width:25px;height:6px;overflow:hidden"><div style="position:absolute;left:0;width:25px;top:-5.61px;text-align:center;font-size:11px;line-height:11px;color:#444444">2</div></div>
<div style="left:0px;top:49px;width:25px;height:14px;overflow:hidden"><div style="position:absolute;left:0;width:25px;top:2.39px;text-align:center;font-size:11px;line-height:11px;color:#444444">3</div></div>
<div style="left:0px;top:64px;width:25px;height:14px;overflow:hidden"><div style="position:absolute;left:0;width:25px;top:2.39px;text-align:center;font-size:11px;line-height:11px;color:#444444">4</div></div>
<div style="left:0px;top:79px;width:25px;height:14px;overflow:hidden"><div style="position:absolute;left:0;width:25px;top:2.39px;text-align:center;font-size:11px;line-height:11px;color:#444444">5</div></div>
<div style="left:0px;top:94px;width:25px;height:14px;overflow:hidden"><div style="position:absolute;left:0;width:25px;top:2.39px;text-align:center;font-size:11px;line-height:11px;color:#217346">6</div></div>
<div style="left:0px;top:109px;width:25px;height:9px;overflow:hidden"><div style="position:absolute;left:0;width:25px;top:-2.61px;text-align:center;font-size:11px;line-height:11px;color:#444444">7</div></div>
<div style="left:0px;top:119px;width:25px;height:14px;overflow:hidden"><div style="position:absolute;left:0;width:25px;top:2.39px;text-align:center;font-size:11px;line-height:11px;color:#444444">8</div></div>
<div style="left:0px;top:134px;width:25px;height:14px;overflow:hidden"><div style="position:absolute;left:0;width:25px;top:2.39px;text-align:center;font-size:11px;line-height:11px;color:#444444">9</div></div>
<div style="left:0px;top:149px;width:25px;height:4px;overflow:hidden"><div style="position:absolute;left:0;width:25px;top:-7.61px;text-align:center;font-size:11px;line-height:11px;color:#444444">10</div></div>
<div style="left:0px;top:154px;width:25px;height:14px;overflow:hidden"><div style="position:absolute;left:0;width:25px;top:2.39px;text-align:center;font-size:11px;line-height:11px;color:#444444">11</div></div>
<div style="left:0px;top:169px;width:25px;height:5px;overflow:hidden"><div style="position:absolute;left:0;width:25px;top:-6.61px;text-align:center;font-size:11px;line-height:11px;color:#444444">12</div></div>
<div style="left:0px;top:175px;width:25px;height:14px;overflow:hidden"><div style="position:absolute;left:0;width:25px;top:2.39px;text-align:center;font-size:11px;line-height:11px;color:#444444">13</div></div>
<div style="left:0px;top:190px;width:25px;height:14px;overflow:hidden"><div style="position:absolute;left:0;width:25px;top:2.39px;text-align:center;font-size:11px;line-height:11px;color:#444444">14</div></div>
<div style="left:0px;top:205px;width:25px;height:7px;overflow:hidden"><div style="position:absolute;left:0;width:25px;top:-4.61px;text-align:center;font-size:11px;line-height:11px;color:#444444">15</div></div>
<div style="left:0px;top:213px;width:25px;height:14px;overflow:hidden"><div style="position:absolute;left:0;width:25px;top:2.39px;text-align:center;font-size:11px;line-height:11px;color:#444444">16</div></div>
<div style="left:0px;top:228px;width:25px;height:14px;overflow:hidden"><div style="position:absolute;left:0;width:25px;top:2.39px;text-align:center;font-size:11px;line-height:11px;color:#444444">17</div></div>
<div style="left:0px;top:243px;width:25px;height:7px;overflow:hidden"><div style="position:absolute;left:0;width:25px;top:-4.61px;text-align:center;font-size:11px;line-height:11px;color:#444444">18</div></div>
<div style="left:0px;top:251px;width:25px;height:14px;overflow:hidden"><div style="position:absolute;left:0;width:25px;top:2.39px;text-align:center;font-size:11px;line-height:11px;color:#444444">19</div></div>
<div style="left:0px;top:266px;width:25px;height:14px;overflow:hidden"><div style="position:absolute;left:0;width:25px;top:2.39px;text-align:center;font-size:11px;line-height:11px;color:#444444">20</div></div>
<div style="left:0px;top:281px;width:25px;height:7px;overflow:hidden"><div style="position:absolute;left:0;width:25px;top:-4.61px;text-align:center;font-size:11px;line-height:11px;color:#444444">21</div></div>
<div style="left:0px;top:289px;width:25px;height:14px;overflow:hidden"><div style="position:absolute;left:0;width:25px;top:2.39px;text-align:center;font-size:11px;line-height:11px;color:#444444">22</div></div>
<div style="left:0px;top:304px;width:25px;height:14px;overflow:hidden"><div style="position:absolute;left:0;width:25px;top:2.39px;text-align:center;font-size:11px;line-height:11px;color:#444444">23</div></div>
<div style="left:0px;top:319px;width:25px;height:14px;overflow:hidden"><div style="position:absolute;left:0;width:25px;top:2.39px;text-align:center;font-size:11px;line-height:11px;color:#444444">24</div></div>
<div style="left:0px;top:334px;width:25px;height:14px;overflow:hidden"><div style="position:absolute;left:0;width:25px;top:2.39px;text-align:center;font-size:11px;line-height:11px;color:#444444">25</div></div>
<div style="left:0px;top:349px;width:25px;height:14px;overflow:hidden"><div style="position:absolute;left:0;width:25px;top:2.39px;text-align:center;font-size:11px;line-height:11px;color:#444444">26</div></div>
<div style="left:0px;top:364px;width:25px;height:14px;overflow:hidden"><div style="position:absolute;left:0;width:25px;top:2.39px;text-align:center;font-size:11px;line-height:11px;color:#444444">27</div></div>
<div style="left:0px;top:379px;width:25px;height:14px;overflow:hidden"><div style="position:absolute;left:0;width:25px;top:2.39px;text-align:center;font-size:11px;line-height:11px;color:#444444">28</div></div>
<div style="left:0px;top:394px;width:25px;height:14px;overflow:hidden"><div style="position:absolute;left:0;width:25px;top:2.39px;text-align:center;font-size:11px;line-height:11px;color:#444444">29</div></div>
<div style="left:0px;top:409px;width:25px;height:14px;overflow:hidden"><div style="position:absolute;left:0;width:25px;top:2.39px;text-align:center;font-size:11px;line-height:11px;color:#444444">30</div></div>
<div style="left:0px;top:424px;width:25px;height:14px;overflow:hidden"><div style="position:absolute;left:0;width:25px;top:2.39px;text-align:center;font-size:11px;line-height:11px;color:#444444">31</div></div>
<div style="left:0px;top:439px;width:25px;height:14px;overflow:hidden"><div style="position:absolute;left:0;width:25px;top:2.39px;text-align:center;font-size:11px;line-height:11px;color:#444444">32</div></div>
<div style="left:0px;top:454px;width:25px;height:14px;overflow:hidden"><div style="position:absolute;left:0;width:25px;top:2.39px;text-align:center;font-size:11px;line-height:11px;color:#444444">33</div></div>
<div style="left:0px;top:469px;width:25px;height:14px;overflow:hidden"><div style="position:absolute;left:0;width:25px;top:2.39px;text-align:center;font-size:11px;line-height:11px;color:#444444">34</div></div>
<div style="left:0px;top:484px;width:25px;height:14px;overflow:hidden"><div style="position:absolute;left:0;width:25px;top:2.39px;text-align:center;font-size:11px;line-height:11px;color:#444444">35</div></div>
<div style="left:1344px;top:19px;width:1px;height:474px;background:#ababab"></div>
<div style="left:1345px;top:0px;width:20px;height:493px;background:#fff"></div>
<div style="left:1348px;top:20px;width:15px;height:457px;background:#f0f0f0"></div>
<div style="left:1348px;top:5px;width:15px;height:15px;background:#fff;border:1px solid #ababab;box-sizing:border-box"></div>
<svg style="left:1348px;top:5px" width="15" height="15"><polygon points="3.5,9.5 11.5,9.5 7.5,5.5" fill="#606060"/></svg>
<div style="left:1348px;top:20px;width:15px;height:236px;background:#fff;border:1px solid #ababab;box-sizing:border-box"></div>
<div style="left:1348px;top:477px;width:15px;height:15px;background:#fff;border:1px solid #ababab;box-sizing:border-box"></div>
<svg style="left:1348px;top:477px" width="15" height="15"><polygon points="3.5,5.5 11.5,5.5 7.5,9.5" fill="#606060"/></svg>
<div style="left:0px;top:493px;width:1365px;height:25px;background:#f5f5f5"></div>
<div style="left:0px;top:492px;width:1345px;height:1px;background:#ababab"></div>
<svg style="left:0;top:493px" width="100" height="25"><polygon points="31,8.5 31,16.5 27,12.5" fill="#1e6b3a"/><polygon points="56,8.5 56,16.5 60,12.5" fill="#1e6b3a"/><rect x="81" y="16" width="2" height="2" fill="#1e6b3a"/><rect x="85" y="16" width="2" height="2" fill="#1e6b3a"/><rect x="89" y="16" width="2" height="2" fill="#1e6b3a"/></svg>
<div style="left:100px;top:496px;width:1px;height:20px;background:#c6c6c6"></div>
<div style="left:253px;top:496px;width:1px;height:20px;background:#c6c6c6"></div>
<div style="left:362px;top:496px;width:1px;height:20px;background:#c6c6c6"></div>
<div style="left:416px;top:496px;width:1px;height:20px;background:#c6c6c6"></div>
<div style="left:631px;top:496px;width:1px;height:20px;background:#c6c6c6"></div>
<div style="left:698px;top:492px;width:144px;height:23px;background:#fff;border-left:1px solid #c6c6c6;border-right:1px solid #c6c6c6;box-sizing:border-box"></div>
<div style="left:698px;top:515px;width:144px;height:2px;background:#217346"></div>
<svg style="left:0;top:493px" width="1365" height="25"><text x="116.5" y="17" font-size="13" fill="#444444" textLength="119.4" lengthAdjust="spacingAndGlyphs">Cash Flow Statement</text><text x="267" y="17" font-size="13" fill="#444444" textLength="79.8" lengthAdjust="spacingAndGlyphs">Balance Sheet</text><text x="374.8" y="17" font-size="13" fill="#444444" textLength="27" lengthAdjust="spacingAndGlyphs">KPI&#39;s</text><text x="434.5" y="17" font-size="13" fill="#444444" textLength="177.3" lengthAdjust="spacingAndGlyphs">Depreciation and Amortization</text><text x="645" y="17" font-size="13" fill="#444444" textLength="38.9" lengthAdjust="spacingAndGlyphs">Payroll</text><text x="710" y="17" font-size="13" font-weight="bold" fill="#217346" textLength="119" lengthAdjust="spacingAndGlyphs">Sensitivity Analysis</text></svg>
<div style="left:860px;top:493px;width:48px;height:25px;overflow:hidden"><svg style="left:0;top:0" width="100" height="25"><text x="0" y="17" font-size="13" fill="#444444" textLength="47.6" lengthAdjust="spacingAndGlyphs">Sensitivit</text></svg></div>
<svg style="left:900px;top:493px" width="100" height="25"><rect x="17" y="16" width="2" height="2" fill="#1e6b3a"/><rect x="21" y="16" width="2" height="2" fill="#1e6b3a"/><rect x="25" y="16" width="2" height="2" fill="#1e6b3a"/><circle cx="49" cy="13" r="7.5" fill="none" stroke="#6a6a6a" stroke-width="1.2"/><rect x="45" y="12" width="8" height="2" fill="#5f5f5f"/><rect x="48" y="9" width="2" height="8" fill="#5f5f5f"/><rect x="77" y="8" width="2" height="2" fill="#a0a0a0"/><rect x="77" y="12" width="2" height="2" fill="#a0a0a0"/><rect x="77" y="16" width="2" height="2" fill="#a0a0a0"/></svg>
<div style="left:994px;top:499px;width:334px;height:15px;background:#e8e8e8"></div>
<div style="left:994px;top:499px;width:15px;height:15px;background:#fff;border:1px solid #ababab;box-sizing:border-box"></div>
<svg style="left:994px;top:499px" width="15" height="15"><polygon points="9.5,3.5 9.5,11.5 5.5,7.5" fill="#606060"/></svg>
<div style="left:1008px;top:499px;width:201px;height:15px;background:#fff;border:1px solid #ababab;box-sizing:border-box"></div>
<div style="left:1328px;top:499px;width:15px;height:15px;background:#fff;border:1px solid #ababab;box-sizing:border-box"></div>
<svg style="left:1328px;top:499px" width="15" height="15"><polygon points="5.5,3.5 5.5,11.5 9.5,7.5" fill="#606060"/></svg>
</div></body></html>
